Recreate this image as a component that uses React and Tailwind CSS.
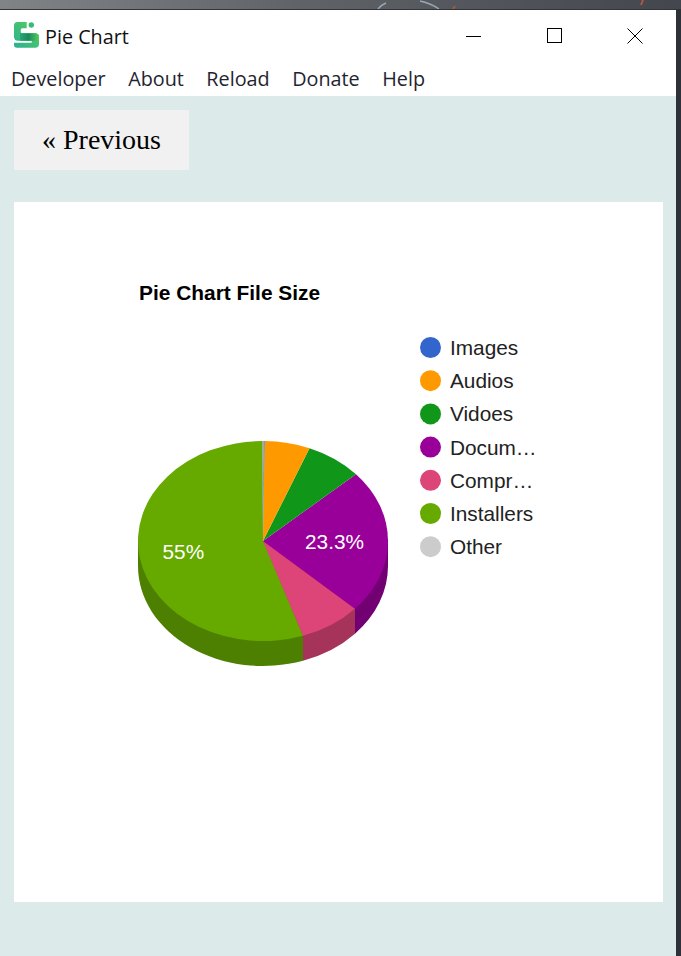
const cx = 263, cy = 541, rx = 125, ry = 100, depth = 25;
const arcY = (x, sign) => cy + sign * ry * Math.sqrt(1 - ((x - cx) / rx) ** 2);

// Slice boundaries on the rim of the pie: x and whether the point lies below (1) or above (-1) the centre.
const rim = {
  other: [262.6, -1],
  images: [263.6, -1],
  audios: [264.6, -1],
  videos: [309.5, -1],
  docs: [356, -1],
  compr: [355, 1],
  inst: [303, 1],
};
const P = (key) => {
  const [x, s] = rim[key];
  return [x, arcY(x, s)];
};
const slice = (from, to, large = 0) => {
  const [x1, y1] = P(from);
  const [x2, y2] = P(to);
  return `M${cx} ${cy} L${x1} ${y1} A${rx} ${ry} 0 ${large} 0 ${x2} ${y2} Z`;
};
// The side wall: the lower rim between x1 and x2, pushed down by the pie's depth.
const wall = (x1, x2) => {
  const y1 = arcY(x1, 1);
  const y2 = arcY(x2, 1);
  return `M${x1} ${y1 - 2} V${y1 + depth} A${rx} ${ry} 0 0 0 ${x2} ${y2 + depth} V${y2 - 2} L${cx} ${cy} Z`;
};

function Logo() {
  return (
    <svg width="26" height="27" viewBox="0 0 26 27" className="shrink-0">
      <defs>
        <linearGradient id="lg" x1="0" y1="1" x2="1" y2="0">
          <stop offset="0" stopColor="#2bb092" />
          <stop offset="1" stopColor="#58d05a" />
        </linearGradient>
        <linearGradient id="mid" x1="0" y1="0" x2="1" y2="0">
          <stop offset="0" stopColor="#2aa574" />
          <stop offset="0.45" stopColor="#178a5c" />
          <stop offset="1" stopColor="#55cd5c" />
        </linearGradient>
      </defs>
      <path d="M3.500 0 H12.700 V6.300 H8 Q6.700 6.300 6.700 8.800 Q6.700 11.300 8 11.300 H21 Q25 11.300 25 15 V22 Q25 25.700 21 25.700 H3 Q0 25.700 0 23 V20.700 H17.700 V18.700 H4 Q0 18.700 0 14.500 V3.500 Q0 0 3.500 0 Z" fill="url(#lg)" />
      <path d="M6 11.300 H21 Q25 11.300 25 15 V18.700 H6 Z" fill="url(#mid)" />
      <circle cx="17.300" cy="3" r="2.700" fill="#35bd78" />
    </svg>
  );
}

const legend = [
  ["Images", "#3366cc"],
  ["Audios", "#ff9900"],
  ["Vidoes", "#109618"],
  ["Docum…", "#990099"],
  ["Compr…", "#dd4477"],
  ["Installers", "#66aa00"],
  ["Other", "#cccccc"],
];

function Wallpaper() {
  return (
    <svg width="681" height="9" viewBox="0 0 681 9" className="block">
      <defs>
        <linearGradient id="wp" x1="0" y1="0" x2="1" y2="0">
          <stop offset="0" stopColor="#808487" />
          <stop offset="0.45" stopColor="#5f6267" />
          <stop offset="1" stopColor="#43464d" />
        </linearGradient>
      </defs>
      <rect width="681" height="9" fill="url(#wp)" />
      <path d="M378 9 Q381 5 386 3" stroke="#a9bcc8" strokeWidth="1.500" fill="none" opacity="0.8" />
      <path d="M420 1 Q430 3 439 9" stroke="#a9bcc8" strokeWidth="1.500" fill="none" opacity="0.8" />
      <path d="M453 9 L455 6" stroke="#a85a40" strokeWidth="2" fill="none" />
      <path d="M641 5 L643 0" stroke="#a85a40" strokeWidth="2" fill="none" />
    </svg>
  );
}

export default function App() {
  return (
    <div className="h-[956px] w-[681px] overflow-hidden bg-[#2e3138]">
      <Wallpaper />
      <div className="h-px w-[677px] bg-[#333538]" />
      <div className="flex h-[946px] w-[676px] flex-col bg-[#dceaea]">
        <div className="bg-white font-['Open_Sans','Noto_Sans',sans-serif] text-[#1f2430]">
          <div className="flex h-[50px] items-center pl-[14px]">
            <Logo />
            <span className="ml-[5px] pt-[4px] text-[19.8px] leading-none text-[#111]">Pie Chart</span>
            <div className="ml-auto flex h-full items-center pt-px">
              <svg width="16" height="16" viewBox="0 0 16 16" className="mr-[65px] ml-px"><path d="M0 8.500H15" stroke="#000" fill="none" /></svg>
              <svg width="16" height="16" viewBox="0 0 16 16" className="mr-[64px]"><rect x="0.500" y="0.500" width="14" height="14" stroke="#000" fill="none" /></svg>
              <svg width="16" height="16" viewBox="0 0 16 16" className="mr-[33px]"><path d="M0.500 0.500L15.500 15.500M15.500 0.500L0.500 15.500" stroke="#000" fill="none" /></svg>
            </div>
          </div>
          <div className="flex h-[36px] items-start gap-[22.5px] pl-[11px] text-[19.8px] leading-[38px]">
            <span>Developer</span>
            <span>About</span>
            <span>Reload</span>
            <span>Donate</span>
            <span>Help</span>
          </div>
        </div>
        <div className="px-[14px] pt-[14px]">
          <div className="flex h-[60px] w-[175px] items-center justify-center bg-[#f1f1f1] font-['Liberation_Serif',serif] text-[28px] text-black">
            « Previous
          </div>
          <div className="mt-[32px] h-[700px] w-[649px] bg-white">
            <svg width="649" height="700" viewBox="14 202 649 700" className="block">
              <g fontFamily="'Liberation Sans', Arial, sans-serif">
                <text x="139" y="300" fontSize="20.900" fontWeight="700" fill="#000">Pie Chart File Size</text>
                <path d={wall(138, 303)} fill="#4d7f00" />
                <path d={wall(303, 355)} fill="#a6335a" />
                <path d={wall(355, 388)} fill="#730073" />
                <path d={slice("other", "inst", 1)} fill="#66aa00" />
                <path d={slice("inst", "compr")} fill="#dd4477" />
                <path d={slice("compr", "docs")} fill="#990099" />
                <path d={slice("docs", "videos")} fill="#109618" />
                <path d={slice("videos", "audios")} fill="#ff9900" />
                <path d={slice("audios", "images")} fill="#3366cc" />
                <path d={slice("images", "other")} fill="#999999" />
                <text x="162.500" y="559" fontSize="20.800" fill="#fff">55%</text>
                <text x="305" y="549" fontSize="20.800" fill="#fff">23.3%</text>
                {legend.map(([label, color], i) => (
                  <g key={label}>
                    <circle cx="430.500" cy={347.500 + i * 33.2} r="10.500" fill={color} />
                    <text x="450" y={355 + i * 33.2} fontSize="20.800" fill="#222">{label}</text>
                  </g>
                ))}
              </g>
            </svg>
          </div>
        </div>
      </div>
    </div>
  );
}
